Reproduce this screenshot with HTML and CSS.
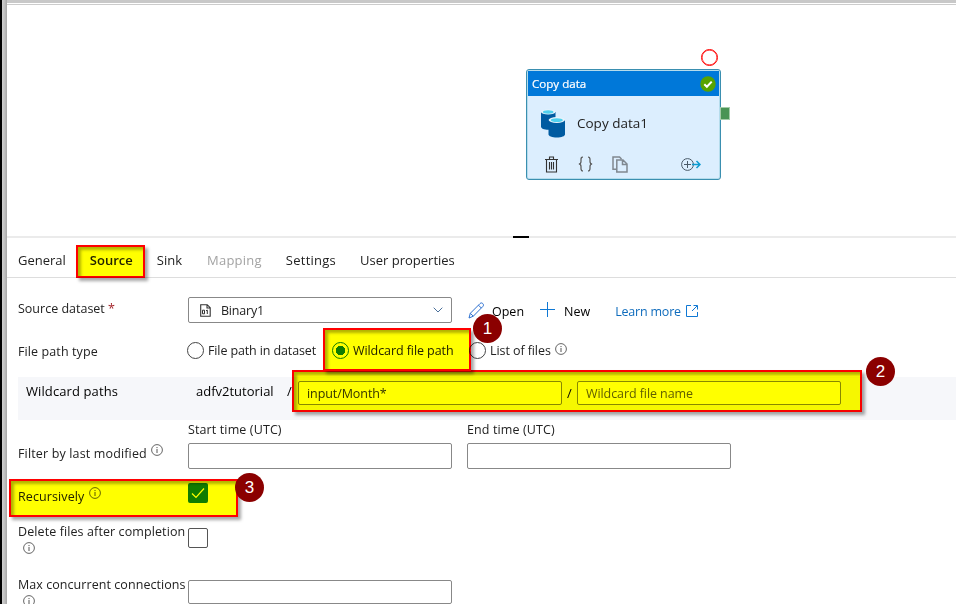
FILE: index.html
```html
<!DOCTYPE html>
<html lang="en">
<head>
    <meta charset="UTF-8">
    <meta name="viewport" content="width=device-width, initial-scale=1.0">
    <title>Copy data1</title>
    <link rel="stylesheet" href="styles.css">
</head>
<body>
    <!-- Shared icons -->
    <svg class="sprite">
        <symbol id="info" viewBox="0 0 12 12">
            <circle cx="6" cy="6" r="5.4" fill="none" stroke="#555" stroke-width="0.9"/>
            <path d="M6 5v4M6 3v1.1" stroke="#555" stroke-width="1"/>
        </symbol>
    </svg>

    <div class="app">
        <div class="canvas">
            <div class="activity">
                <div class="activity-header">
                    <span>Copy data</span>
                    <svg width="16" height="16" viewBox="0 0 16 16">
                        <circle cx="8" cy="8" r="7.7" fill="#57a300"/>
                        <path d="M4.3 8.2l2.6 2.6 4.8-5.2" fill="none" stroke="#fff" stroke-width="2"/>
                    </svg>
                </div>
                <div class="activity-name">
                    <svg width="26" height="29" viewBox="0 0 26 29">
                        <path d="M1 3v14.500c0 2 3 3.300 7.500 3.300s7-1.300 7-3.300V3z" fill="#005ba1"/>
                        <ellipse cx="8.200" cy="3" rx="7.200" ry="2.600" fill="#e8f4fb"/>
                        <ellipse cx="8.200" cy="3" rx="5.300" ry="1.700" fill="#50d0ee"/>
                        <path d="M8.500 11v14.300c0 2 3.500 3.200 8.300 3.200s8.200-1.200 8.200-3.200V11z" fill="#005ba1"/>
                        <ellipse cx="16.800" cy="11" rx="8.200" ry="2.900" fill="#e8f4fb"/>
                        <ellipse cx="16.800" cy="11.200" rx="6" ry="1.900" fill="#50d0ee"/>
                    </svg>
                    <span>Copy data1</span>
                </div>
                <div class="activity-actions">
                    <svg width="13" height="17" viewBox="0 0 13 17">
                        <path d="M0 3.500h13M4.500 3V1h4v2M1.500 3.500V16h10V3.500M4.500 6v7.500M6.500 6v7.500M8.500 6v7.500" fill="none" stroke="#333" stroke-width="1.100"/>
                    </svg>
                    <svg width="15" height="16" viewBox="0 0 15 16">
                        <path d="M5 1C3 1 3 2 3 3.500v2C3 7 2.500 8 .800 8c1.700 0 2.200 1 2.200 2.500v2C3 14 3 15 5 15M10 1c2 0 2 1 2 2.500v2C12 7 12.500 8 14.200 8c-1.700 0-2.200 1-2.200 2.500v2c0 1.500 0 2.500-2 2.500" fill="none" stroke="#555" stroke-width="1.200"/>
                    </svg>
                    <svg width="16" height="17" viewBox="0 0 16 17">
                        <path d="M4.500 13.200H1V1h6.500l2 2M4.800 4h6.200l4 4v8H4.800zM10.500 4v4.500H15" fill="none" stroke="#808890" stroke-width="1.500"/>
                    </svg>
                    <svg class="add-output" width="20" height="13" viewBox="0 0 20 13">
                        <circle cx="6.500" cy="6.500" r="5.900" fill="none" stroke="#4a5a68"/>
                        <path d="M6.500 3v7M3 6.500h7" stroke="#4a5a68"/>
                        <path d="M11 6.500h8M15.500 3L19 6.500 15.500 10" fill="none" stroke="#0d9bd0" stroke-width="1.500"/>
                    </svg>
                </div>
                <div class="breakpoint"></div>
                <div class="connector"></div>
            </div>
        </div>
        <div class="splitter"><div class="splitter-handle"></div></div>

        <nav class="tabs">
            <a class="tab">General</a>
            <a class="tab active">Source</a>
            <a class="tab">Sink</a>
            <a class="tab wide disabled">Mapping</a>
            <a class="tab wide">Settings</a>
            <a class="tab">User properties</a>
        </nav>

        <form class="form">
            <div class="row row-dataset">
                <div class="label">Source dataset <span class="required">*</span></div>
                <div class="controls">
                    <div class="select">
                        <svg width="11" height="13" viewBox="0 0 11 13">
                            <path d="M.700.700h6.500l3 3v8.600H.700zM7 .700V4h3.200" fill="none" stroke="#333" stroke-width="1.100"/>
                            <path d="M2.500 6.200h2v3.600h-2zM6 6.700l1.300-.600V10" fill="none" stroke="#333"/>
                        </svg>
                        <span>Binary1</span>
                        <svg width="10" height="6" viewBox="0 0 10 6">
                            <path d="M.700.700L5 5 9.300.700" fill="none" stroke="#4a6f9a"/>
                        </svg>
                    </div>
                    <div class="link open">
                        <svg width="17" height="17" viewBox="0 0 17 17">
                            <path d="M1 16l1.300-4.700L12 1.600c1-1 2-.800 2.800 0s1 1.900 0 2.900L5.300 14.200zM2.300 11.300l3 2.900M10.500 3.200l2.900 2.900" fill="none" stroke="#2b6fd0"/>
                        </svg>
                        <span>Open</span>
                    </div>
                    <div class="link new">
                        <svg width="16" height="16" viewBox="0 0 16 16">
                            <path d="M7.500 0v15M0 7.500h15" stroke="#0f78d4"/>
                        </svg>
                        <span>New</span>
                    </div>
                    <div class="link learn">
                        <span>Learn more</span>
                        <svg width="12" height="12" viewBox="0 0 12 12">
                            <path d="M5 .500H.500v11h11V7M7.500.500h4v4M11.200.800L6 6" fill="none" stroke="#0f78d4"/>
                        </svg>
                    </div>
                </div>
            </div>

            <div class="row row-type">
                <div class="label">File path type</div>
                <div class="controls">
                    <span class="radio"></span><span class="radio-text in-dataset">File path in dataset</span>
                    <span class="radio checked"></span><span class="radio-text wildcard">Wildcard file path</span>
                    <span class="radio"></span><span class="radio-text">List of files</span>
                    <svg class="info" width="12" height="12"><use href="#info"/></svg>
                </div>
            </div>

            <div class="row row-wildcard">
                <div class="label">Wildcard paths</div>
                <div class="controls">
                    <span class="container-name">adfv2tutorial</span>
                    <span class="slash first">/</span>
                    <div class="input filled">input/Month*</div>
                    <span class="slash">/</span>
                    <div class="input placeholder">Wildcard file name</div>
                </div>
            </div>

            <div class="row row-filter">
                <div class="label">Filter by last modified <svg class="info" width="12" height="12"><use href="#info"/></svg></div>
                <div class="controls">
                    <div class="field">
                        <span>Start time (UTC)</span>
                        <div class="input"></div>
                    </div>
                    <div class="field">
                        <span>End time (UTC)</span>
                        <div class="input"></div>
                    </div>
                </div>
            </div>

            <div class="row row-recursive">
                <div class="label">Recursively <svg class="info" width="12" height="12"><use href="#info"/></svg></div>
                <div class="checkbox checked">
                    <svg width="14" height="12" viewBox="0 0 14 12">
                        <path d="M1 6.500L5 10.500 13 1.500" fill="none" stroke="#fff" stroke-width="1.200"/>
                    </svg>
                </div>
            </div>

            <div class="row row-delete">
                <div class="label">Delete files after completion <svg class="info" width="12" height="12"><use href="#info"/></svg></div>
                <div class="checkbox"></div>
            </div>

            <div class="row row-max">
                <div class="label">Max concurrent connections <svg class="info" width="12" height="12"><use href="#info"/></svg></div>
                <div class="input"></div>
            </div>
        </form>
    </div>

    <!-- Annotations over the page -->
    <div class="highlight highlight-source"></div>
    <div class="highlight highlight-type"></div>
    <div class="highlight highlight-paths"></div>
    <div class="highlight highlight-recursive"></div>
    <div class="step step-1">1</div>
    <div class="step step-2">2</div>
    <div class="step step-3">3</div>
</body>
</html>
```
FILE: styles.css
```css
* {
    margin: 0;
    padding: 0;
    box-sizing: border-box;
}

body {
    position: relative;
    width: 956px;
    height: 604px;
    overflow: hidden;
    background: linear-gradient(to right, #000 2px, #cdcdcd 2px, #c4c4c4 4px, #a6a6a6 7px, #c8c8c8 7px);
    padding: 3px 0 0 7px;
    font-family: "Open Sans", "Noto Sans", sans-serif;
    font-size: 12.5px;
    line-height: 16px;
    color: #222;
}

.sprite {
    position: absolute;
    width: 0;
    height: 0;
}

svg {
    flex: none;
}

.app {
    height: 601px;
    background: #fff;
    border-top: 1px solid #fff;
    overflow: hidden;
}

/* Pipeline canvas */
.canvas {
    height: 232px;
    border-top: 1px solid #ccc;
    padding: 64px 0 0 519px;
}

.activity {
    position: relative;
    width: 195px;
    height: 111px;
    background: #dceefe;
    border: 1px solid #3a8fb0;
    border-radius: 3px;
    box-shadow: inset 0 0 0 1px #b5dcec;
}

.activity-header {
    display: flex;
    justify-content: space-between;
    align-items: center;
    height: 25px;
    margin: 1px 1px 0;
    padding: 0 3px 0 4px;
    background: #0078d9;
    color: #fff;
    font-size: 11.6px;
    font-weight: 500;
    -webkit-text-stroke: 0.2px #fff;
}

.activity-name {
    display: flex;
    align-items: center;
    height: 54px;
    padding-left: 13px;
    font-size: 13.5px;
}

.activity-name span {
    margin: -1px 0 0 11px;
}

.activity-actions {
    display: flex;
    align-items: center;
    gap: 19.5px;
    height: 28px;
    padding: 0 19px 0 18px;
}

.add-output {
    margin-left: auto;
}

.breakpoint {
    position: absolute;
    top: -21px;
    left: 174px;
    width: 17px;
    height: 17px;
    border: 1px solid #f00;
    border-radius: 50%;
    background: #fff;
    box-shadow: inset 0 0 0 0.5px #f00;
}

.connector {
    position: absolute;
    top: 37px;
    left: 193px;
    width: 10px;
    height: 13px;
    background: #4a9455;
    border: 1px solid #a5cba9;
}

.splitter {
    height: 2px;
    background: #ebebeb;
}

.splitter-handle {
    width: 16px;
    height: 2px;
    margin-left: 506px;
    background: #000;
}

/* Tabs */
.tabs {
    display: flex;
    align-items: center;
    height: 40px;
    padding: 5px 0 0 11px;
    border-bottom: 1px solid #ddd;
    font-size: 13px;
}

.tab {
    margin-right: 24px;
}

.tab.wide {
    letter-spacing: 0.25px;
}

.tab.active {
    font-weight: 600;
}

.tab.disabled {
    color: #a3a3a3;
    margin-left: 1px;
}

/* Form */
.row {
    display: grid;
    grid-template-columns: 170px 1fr;
    align-items: start;
    padding-left: 11px;
}

.controls {
    display: flex;
}

.label {
    letter-spacing: 0.1px;
}

.required {
    color: #a4262c;
}

.input,
.select {
    width: 264px;
    height: 26px;
    border: 1px solid #888;
    border-radius: 2px;
    background: #fff;
}

.row-dataset {
    height: 56px;
    padding-top: 19px;
}

.row-dataset .label {
    padding-top: 4px;
    letter-spacing: 0;
}

.row-dataset .controls {
    align-items: center;
}

.select {
    display: flex;
    align-items: center;
    padding: 0 8px 0 11px;
}

.select span {
    flex: 1;
    margin: 2px 0 0 10px;
    letter-spacing: -0.2px;
}

.link {
    display: flex;
    align-items: center;
    padding-top: 2px;
    color: #000;
}

.link span {
    padding-top: 1px;
}

.open {
    margin-left: 16px;
    gap: 7px;
}

.new {
    margin-left: 16px;
    gap: 8px;
}

.link svg {
    margin-top: -2px;
}

.learn {
    margin-left: 25px;
    gap: 5px;
    color: #0f6cbd;
    letter-spacing: -0.2px;
}

.learn svg {
    margin-top: 0;
}

.row-type {
    height: 43px;
    padding-top: 7px;
}

.row-type .label {
    padding-top: 3px;
}

.row-type .controls {
    align-items: center;
    margin-left: -1px;
}

.radio {
    flex: none;
    width: 17px;
    height: 17px;
    border: 1px solid #444;
    border-radius: 50%;
    background: #fff;
}

.radio.checked {
    border-color: #107c10;
    background: radial-gradient(circle, #107c10 4.500px, #fff 5px);
}

.radio-text {
    margin-left: 4px;
    padding-top: 2px;
    white-space: nowrap;
    letter-spacing: -0.08px;
}

.in-dataset {
    width: 124px;
    letter-spacing: -0.12px;
}

.wildcard {
    width: 116px;
}

.row-type .info {
    margin: -3px 0 0 4px;
}

.row-wildcard {
    height: 43px;
    margin-left: 11px;
    padding: 4px 0 0 8px;
    background: #f6f7fa;
    color: #000;
    font-size: 13px;
}

.row-wildcard .label {
    padding-top: 2px;
}

.row-wildcard .input {
    height: 24px;
    padding: 4px 8px;
    font-size: 12.5px;
    letter-spacing: -0.08px;
    color: #333;
}

.container-name {
    width: 91px;
    padding-top: 2px;
}

.slash {
    width: 15px;
    padding-top: 4px;
    text-align: center;
}

.slash.first {
    width: 11px;
    padding-top: 2px;
    text-align: left;
}

.row-wildcard .placeholder {
    color: #605e5c;
}

.row-filter {
    height: 57px;
    padding-top: 2px;
}

.row-filter .label {
    padding-top: 22px;
    letter-spacing: 0.15px;
}

.row-filter .controls {
    gap: 15px;
}

.field span {
    letter-spacing: 0.12px;
}

.field .input {
    margin-top: 5px;
}

.label .info {
    margin-left: 1px;
    vertical-align: 2px;
}

.row-recursive {
    height: 43px;
    padding-top: 6px;
}

.row-recursive .label {
    padding-top: 4px;
}

.checkbox {
    display: flex;
    align-items: center;
    justify-content: center;
    width: 20px;
    height: 20px;
    border: 1px solid #555;
    border-radius: 2px;
}

.checkbox.checked {
    border: none;
    background: #107c10;
}

.row-delete {
    height: 52px;
    padding-top: 4px;
}

.row-delete .label {
    white-space: nowrap;
}

.row-delete .checkbox {
    margin-top: 4px;
}

.row-max {
    padding-top: 5px;
}

.row-max .label {
    letter-spacing: 0.06px;
    white-space: nowrap;
}

.row-max .input {
    height: 24px;
    margin-top: 3px;
}

.row-delete .info,
.row-max .info {
    display: block;
    margin: 2px 0 0 5px;
}

/* Annotations */
.highlight {
    position: absolute;
    border: 2px solid #f00;
    background: #ff0;
    box-shadow: 3px 3px 3px rgba(0, 0, 0, 0.35), inset 3px 3px 3px rgba(0, 0, 0, 0.3);
    mix-blend-mode: multiply;
}

.highlight-source {
    left: 76px;
    top: 245px;
    width: 69px;
    height: 33px;
}

.highlight-type {
    left: 323px;
    top: 328px;
    width: 148px;
    height: 43px;
}

.highlight-paths {
    left: 292px;
    top: 370px;
    width: 570px;
    height: 42px;
}

.highlight-recursive {
    left: 9px;
    top: 479px;
    width: 229px;
    height: 38px;
}

.step {
    position: absolute;
    width: 29px;
    height: 29px;
    border-radius: 50%;
    background: #8b0000;
    color: #fff;
    font: 17px/29px "Liberation Sans", Arial, sans-serif;
    text-align: center;
}

.step-1 {
    left: 473px;
    top: 314px;
}

.step-2 {
    left: 866px;
    top: 357px;
}

.step-3 {
    left: 235px;
    top: 473px;
}
```
